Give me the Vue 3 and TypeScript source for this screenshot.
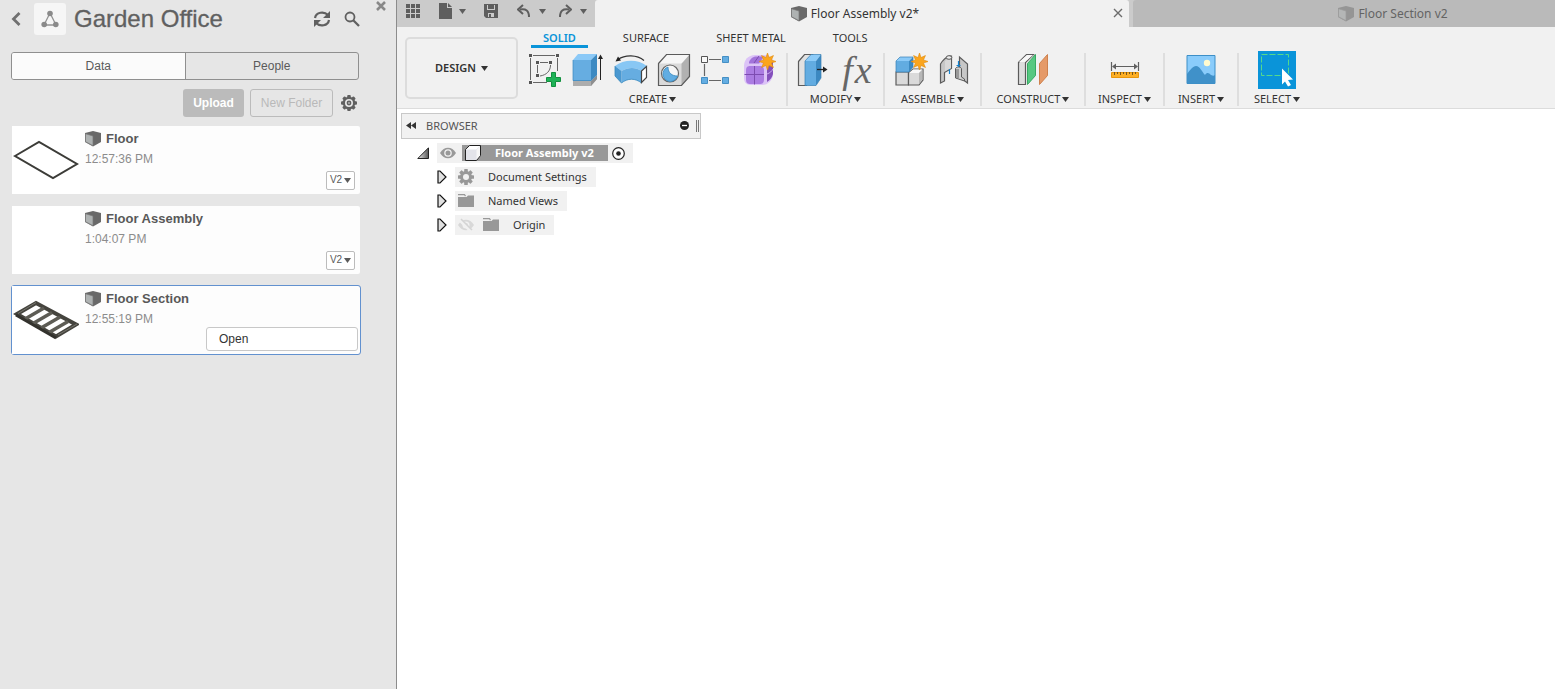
<script setup lang="ts">
import { ref } from 'vue'

interface Project { name: string; time: string; preview: 'frame' | 'blank' | 'joists'; selected: boolean }
interface Tool { icon: string; label: string }
interface Group { label: string; size: string; tools: Tool[] }
interface TreeNode { label: string; icon: string; hidden: boolean }

const projects: Project[] = [
  { name: 'Floor', time: '12:57:36 PM', preview: 'frame', selected: false },
  { name: 'Floor Assembly', time: '1:04:07 PM', preview: 'blank', selected: false },
  { name: 'Floor Section', time: '12:55:19 PM', preview: 'joists', selected: true },
]

const ribbonTabs: string[] = ['SOLID', 'SURFACE', 'SHEET METAL', 'TOOLS']
const activeRibbon = ref('SOLID')
const panelTab = ref('Data')

const groups: Group[] = [
  {
    label: 'CREATE', size: 'create',
    tools: [
      { icon: 'sketch', label: 'Create Sketch' }, { icon: 'extrude', label: 'Extrude' },
      { icon: 'revolve', label: 'Revolve' }, { icon: 'hole', label: 'Hole' },
      { icon: 'pattern', label: 'Pattern' }, { icon: 'form', label: 'Create Form' },
    ],
  },
  { label: 'MODIFY', size: 'pair', tools: [{ icon: 'presspull', label: 'Press Pull' }, { icon: 'fx', label: 'Parameters' }] },
  { label: 'ASSEMBLE', size: 'pair', tools: [{ icon: 'component', label: 'New Component' }, { icon: 'joint', label: 'Joint' }] },
  { label: 'CONSTRUCT', size: 'construct', tools: [{ icon: 'plane', label: 'Offset Plane' }] },
  { label: 'INSPECT', size: 'inspect', tools: [{ icon: 'measure', label: 'Measure' }] },
  { label: 'INSERT', size: 'insert', tools: [{ icon: 'picture', label: 'Decal' }] },
  { label: 'SELECT', size: 'select', tools: [{ icon: 'pick', label: 'Select' }] },
]

const nodes: TreeNode[] = [
  { label: 'Document Settings', icon: 'cog', hidden: false },
  { label: 'Named Views', icon: 'folder', hidden: false },
  { label: 'Origin', icon: 'folder', hidden: true },
]
</script>

<template>
  <svg class="defs" width="0" height="0" aria-hidden="true">
    <defs>
      <linearGradient id="gTri" x1="0" y1="0" x2="1" y2="0"><stop offset="0" stop-color="#eee" /><stop offset="1" stop-color="#555" /></linearGradient>
      <symbol id="cube" viewBox="0 0 16 16">
        <path d="M0 2 8 0l8 2v9l-8 4.500-8-4.500z" fill="#696969" />
        <path d="M.5 2.700 8 5v9.700L.5 10.700z" fill="#aeb2b2" stroke="#777" stroke-width=".7" />
      </symbol>
      <symbol id="caret" viewBox="0 0 7 5"><path d="M0 0h7L3.500 5z" fill="currentColor" /></symbol>
      <symbol id="cog" viewBox="0 0 16 16">
        <g fill="currentColor">
          <rect x="6.200" y="0" width="3.600" height="16" rx=".6" />
          <rect x="6.200" y="0" width="3.600" height="16" rx=".6" transform="rotate(45 8 8)" />
          <rect x="6.200" y="0" width="3.600" height="16" rx=".6" transform="rotate(90 8 8)" />
          <rect x="6.200" y="0" width="3.600" height="16" rx=".6" transform="rotate(135 8 8)" />
          <circle cx="8" cy="8" r="6" />
        </g>
        <circle cx="8" cy="8" r="3" fill="#f1f1f1" />
      </symbol>
      <symbol id="gear" viewBox="0 0 16 16">
        <g fill="currentColor">
          <rect x="6.200" y="0" width="3.600" height="16" rx="1" />
          <rect x="6.200" y="0" width="3.600" height="16" rx="1" transform="rotate(45 8 8)" />
          <rect x="6.200" y="0" width="3.600" height="16" rx="1" transform="rotate(90 8 8)" />
          <rect x="6.200" y="0" width="3.600" height="16" rx="1" transform="rotate(135 8 8)" />
          <circle cx="8" cy="8" r="6.300" />
        </g>
        <circle cx="8" cy="8" r="4" fill="#e6e6e6" />
        <circle cx="8" cy="8" r="2.400" fill="currentColor" />
        <circle cx="8" cy="8" r=".8" fill="#e6e6e6" />
      </symbol>
      <symbol id="folder" viewBox="0 0 16 16">
        <path d="M0 1.700h6.500l1 1.500" stroke="#989898" stroke-width="1.200" fill="none" />
        <path d="M0 4h8.500L10 2.500h6V14H0z" fill="#989898" />
      </symbol>
      <symbol id="burst" viewBox="-8 -8 16 16">
        <path d="M0-8 1.400-3.700 5.600-5.600 3.700-1.400 8 0 3.700 1.400 5.600 5.600 1.400 3.700 0 8-1.400 3.700-5.600 5.600-3.700 1.400-8 0-3.700-1.400-5.600-5.600-1.400-3.700z" fill="#fba51d" stroke="#e28d10" stroke-width=".6" />
      </symbol>

      <symbol id="t-sketch" viewBox="0 0 36 36">
        <path d="M6 3.500h22M3.500 6v22M6 30.500h14M30.500 6v13" stroke="#666" fill="none" />
        <path d="M2 2h3v3H2zM29 2h3v3h-3zM2 29h3v3H2zM9 9h3v3H9zM22 9h3v3h-3zM9 22h3v3H9z" fill="#555" />
        <path d="M13 10.500h8M10.500 13v8M23.500 13c0 6-4 10-10.500 11" stroke="#666" fill="none" />
        <path d="M24.500 20.500h4v5h5v4h-5v5h-4v-5h-5v-4h5z" fill="#1eb257" stroke="#12913f" />
      </symbol>
      <symbol id="t-extrude" viewBox="0 0 36 36">
        <path d="M3 29h18l6-6v4l-6 7H3z" fill="#adadad" /><path d="m21 29 6-6v4l-6 7z" fill="#8f8f8f" />
        <path d="M3 8 8 2h19l-6 6z" fill="#8bc9f7" /><path d="M3 8h18v21H3z" fill="#66ade1" /><path d="m21 8 6-6v21l-6 6z" fill="#3c8ac2" />
        <path d="M3 28.500h18M3 8v20.500" stroke="#3987bd" stroke-width=".7" />
        <path d="M30.500 28V5" stroke="#222" /><path d="m28 7 2.500-4.500L33 7z" fill="#222" />
      </symbol>
      <symbol id="t-revolve" viewBox="0 0 36 36">
        <path d="M5 7.500c7-5 19-5 26 1" stroke="#333" stroke-width="1.200" fill="none" /><path d="M2.500 9.500 5 4.500l3 4z" fill="#222" />
        <path d="M2 14c9-7 23-7 32 0l-5.500 5c-6-4-13-4-20 0z" fill="#88c7f4" />
        <path d="M8.500 19c7-4 14-4 20 0v12c-6-5-14-5-20 0z" fill="#66ade1" />
        <path d="m2 14 6.500 5v12L2 24z" fill="#4a98d0" />
        <path d="M2 14v10l6.500 7c6-5 14-5 20 0" fill="none" stroke="#3588be" stroke-width=".8" />
        <path d="m33.500 14.500-5 4.500v11.500l5-5z" fill="#fff" stroke="#444" stroke-width="1.200" />
      </symbol>
      <symbol id="t-hole" viewBox="0 0 36 36">
        <path d="m2.500 11.500 8-9h23v22l-8 9h-23z" fill="#dadada" /><path d="m25.500 11.500 8-9v22l-8 9z" fill="#b1b1b1" /><path d="m2.500 11.500 8-9h23l-8 9z" fill="#f6f6f6" />
        <path d="m2.500 11.500 8-9h23v22l-8 9h-23z" fill="none" stroke="#5b5b5b" stroke-width="1.200" />
        <circle cx="14" cy="21.500" r="8.500" fill="#f6f6f6" stroke="#666" stroke-width="1.200" />
        <path d="M12 15c0 6 4 9 9.500 9A7.400 7.400 0 1 1 12 15" fill="#61ade2" stroke="#3588be" stroke-width=".8" />
      </symbol>
      <symbol id="t-pattern" viewBox="0 0 36 36">
        <path d="M10 7.500h12M5.500 12v12M10 28.500h12" stroke="#666" stroke-width="1.200" />
        <path d="M2.500 4.500h6v6h-6z" fill="#f8f8f8" stroke="#555" />
        <path d="M23.500 4.500h6v6h-6zM2.500 25.500h6v6h-6zM23.500 25.500h6v6h-6z" fill="#63ade2" stroke="#458fc4" />
      </symbol>
      <symbol id="t-form" viewBox="0 0 36 36">
        <path d="M2 14C2 8 6 3 13 3h9c6 0 9 3 9 7v12c0 6-5 11-11 11H9c-5 0-7-3-7-7z" fill="#dcc4f7" />
        <path d="M7 10c2-4 4-5.500 8-5.500h7l-5 7H7z" fill="#a273da" />
        <path d="M4 19c0-4 1-5 5-5h8c4 0 5 1 5 5v8c0 4-1 5-5 5H9c-4 0-5-1-5-5z" fill="#ab7ce2" />
        <path d="M25 15c1-3 4-5 6-6v13c-1 4-3 6-6 8z" fill="#8450bb" />
        <path d="M2.500 22.500H22M12.500 14v18.500M12 11l5-7" stroke="#7d4cb0" fill="none" /><path d="M25 22c3-1 5-3 6-5" stroke="#c9a6ee" fill="none" />
        <use href="#burst" x="17" y="1" width="17" height="17" />
      </symbol>
      <symbol id="t-presspull" viewBox="0 0 36 36">
        <path d="M2.500 9.500 8.500 2.500h8l-6 7v24h-8z" fill="#e1e1e1" stroke="#5b5b5b" stroke-width="1.200" />
        <path d="m9 9 6-6.500h10L20 9z" fill="#8ccbf8" /><path d="M9 9h11v24.500H9z" fill="#62ace1" /><path d="m20 9 5-6.500V26l-5 7.500z" fill="#3c89c1" />
        <path d="M9 9 15 2.500h10V26l-5 7.500H9z" fill="none" stroke="#3780b4" stroke-width=".7" />
        <path d="M21 17.500h8" stroke="#222" stroke-width="1.300" /><path d="m27 14.500 4.500 3-4.500 3z" fill="#222" />
      </symbol>
      <symbol id="t-component" viewBox="0 0 36 36">
        <path d="M3 20h12.500v13H3z" fill="#dadada" stroke="#5b5b5b" stroke-width="1.200" />
        <path d="m15.500 21 4.500-4h10v11l-4 5H15.500z" fill="#dadada" stroke="#5b5b5b" stroke-width="1.200" />
        <path d="m16 21 4-3.500h9.500L26 21z" fill="#f8f8f8" /><path d="m26 21 3.500-3.500v10L26 32z" fill="#b7b7b7" />
        <path d="m3 9 4-4h13l-4 4z" fill="#8bcaf8" /><path d="M3 9h13v11H3z" fill="#62ace1" /><path d="m16 9 4-4v10l-4 5z" fill="#3c89c1" />
        <path d="m3 9 4-4h13v10l-4 5H3z" fill="none" stroke="#3780b4" stroke-width=".7" />
        <use href="#burst" x="18" y="1" width="17" height="17" />
      </symbol>
      <symbol id="t-joint" viewBox="0 0 36 36">
        <path d="M4.500 31V12c3-5 5-6.500 9-8h2v12.500l-7 4V29z" fill="#c7c7c7" stroke="#5c5c5c" stroke-width="1.200" />
        <path d="M9 9v10l6-3V5z" fill="#d8d8d8" /><ellipse cx="13" cy="5.500" rx="2.800" ry="1.800" fill="#eee" stroke="#5c5c5c" />
        <path d="M31.500 31V12l-8-7v20z" fill="#c7c7c7" stroke="#5c5c5c" stroke-width="1.200" />
        <path d="M19.500 16.500c1-2 5-2 6 0V25l3 2v2l-9-3z" fill="#cfcfcf" stroke="#5c5c5c" />
        <path d="M20 17v9h3v-9z" fill="#999" /><path d="M13.500 17v5M22.500 9v6m-2-1.500h4" stroke="#1683ce" stroke-width="1.200" fill="none" />
      </symbol>
      <symbol id="t-plane" viewBox="0 0 36 36">
        <path d="m3.500 10.500 8-8h7l-8 8v22h-7z" fill="#ddd" stroke="#5b5b5b" stroke-width="1.200" /><path d="m4 10 8-7h6l-8 7z" fill="#f7f7f7" />
        <path d="m12.500 11.500 8-9v21l-8 9z" fill="#57c881" stroke="#37a963" />
        <path d="m24.500 11.500 8-9v21l-8 9z" fill="#e59a68" stroke="#ce814d" />
      </symbol>
      <symbol id="t-measure" viewBox="0 0 36 36">
        <path d="M4.500 10v9M31.500 10v9M6 14.500h24" stroke="#606060" stroke-width="1.200" /><path d="m5 14.500 4-3v6zM31 14.500l-4-3v6z" fill="#606060" />
        <path d="M4.500 20.500h27v5h-27z" fill="#fdaf25" stroke="#e8960c" />
        <path d="M7.500 20v3M10.500 20v2M13.500 20v3M16.500 20v2M19.500 20v3M22.500 20v2M25.500 20v3M28.500 20v2" stroke="#76561c" />
      </symbol>
      <symbol id="t-picture" viewBox="0 0 36 36">
        <path d="M4 3.500h28v28H4z" fill="#8accfb" /><path d="M4 22c3-4 6-8 9-8 4 0 6 6 9 9 2-3 4-2 6 0 2 1 3 1 4 0v9H4z" fill="#4091c9" />
        <path d="M4 3.500h28v28H4z" fill="none" stroke="#3d8fc7" /><circle cx="24" cy="11" r="3.200" fill="#fffbd0" />
      </symbol>
      <symbol id="t-pick" viewBox="0 0 38 38">
        <path d="M0 0h38v38H0z" fill="#0a94d9" /><path d="M3.500 3.500h27v21h-27z" fill="none" stroke="#54d98c" stroke-dasharray="6 2" />
        <path d="m24 17.500 11 11-5 .5 3 5-3 1.500-3-5-3 3z" fill="#fff" />
      </symbol>
    </defs>
  </svg>

  <div class="app">
    <aside class="data-panel">
      <button class="close-panel" aria-label="Close panel">
        <svg width="10" height="10" viewBox="0 0 10 10"><path d="m1 1 8 8M9 1 1 9" stroke="#888" stroke-width="2.500" /></svg>
      </button>
      <header class="project-head">
        <button class="back" aria-label="Back">
          <svg width="10" height="14" viewBox="0 0 10 14"><path d="M8.500 1 2.500 7l6 6" fill="none" stroke="#707070" stroke-width="2.800" /></svg>
        </button>
        <span class="project-icon">
          <svg width="18" height="18" viewBox="0 0 18 18"><path d="m9 3-6 12h12z" fill="none" stroke="#929292" stroke-width="1.300" /><g fill="#8a8a8a"><circle cx="9" cy="3.500" r="2.800" /><circle cx="3.200" cy="14.500" r="2.800" /><circle cx="14.800" cy="14.500" r="2.800" /></g></svg>
        </span>
        <h1>Garden Office</h1>
        <button aria-label="Refresh">
          <svg width="18" height="18" viewBox="0 0 18 18"><g fill="none" stroke="#606060" stroke-width="2.200"><path d="M2 8c1-6 9-7 13-3M16 10c-1 6-9 7-13 3" /></g><path d="M17 1v7h-7zM1 17v-7h7z" fill="#606060" /></svg>
        </button>
        <button class="search" aria-label="Search">
          <svg width="16" height="16" viewBox="0 0 16 16"><circle cx="6" cy="6" r="4.500" fill="none" stroke="#606060" stroke-width="1.800" /><path d="m9 9 6 6" stroke="#606060" stroke-width="2.300" /></svg>
        </button>
      </header>

      <div class="segmented">
        <button v-for="t in ['Data', 'People']" :key="t" :class="{ on: panelTab === t }" @click="panelTab = t">{{ t }}</button>
      </div>

      <div class="actions">
        <button class="upload">Upload</button>
        <button class="new-folder">New Folder</button>
        <button class="settings" aria-label="Settings"><svg width="16" height="16"><use href="#gear" /></svg></button>
      </div>

      <ul class="projects">
        <li v-for="p in projects" :key="p.name" :class="{ selected: p.selected }">
          <div class="preview">
            <svg v-if="p.preview === 'frame'" width="66" height="42" viewBox="0 0 66 42"><path d="m2 17 24-14 38 22-24 14z" fill="none" stroke="#3c3c38" stroke-width="2" /></svg>
            <svg v-else-if="p.preview === 'joists'" width="66" height="42" viewBox="0 0 66 42">
              <path d="m4 15 19-11 40 21.500-20 12z" fill="none" stroke="#45443e" stroke-width="4" />
              <path d="m12 20 19-11M20 24.500l19-11M28 29l19-11M36 33.500l19-11" stroke="#5d5c55" stroke-width="3.500" />
              <path d="m5 14.500 18-11M45 36l19-11" stroke="#77766e" />
              <path d="m3 16 40 23" stroke="#33322d" stroke-width="3" />
            </svg>
          </div>
          <div class="info">
            <h2><svg width="16" height="16"><use href="#cube" /></svg>{{ p.name }}</h2>
            <time>{{ p.time }}</time>
          </div>
          <button v-if="p.selected" class="open">Open</button>
          <button v-else class="version">V2<svg width="7" height="5"><use href="#caret" /></svg></button>
        </li>
      </ul>
    </aside>

    <main class="workspace">
      <div class="top-strip">
        <div class="quick">
          <button class="q-grid" aria-label="Data panel">
            <svg width="14" height="14" viewBox="0 0 14 14"><path d="M0 0h4v4H0zM5 0h4v4H5zM10 0h4v4h-4zM0 5h4v4H0zM5 5h4v4H5zM10 5h4v4h-4zM0 10h4v4H0zM5 10h4v4H5zM10 10h4v4h-4z" fill="#5e5e5e" /></svg>
          </button>
          <button class="q-file" aria-label="File">
            <svg width="14" height="16" viewBox="0 0 14 16"><path d="M0 0h8v5h5v11H0zM9 0l4 4H9z" fill="#5e5e5e" /></svg>
            <svg width="7" height="5"><use href="#caret" /></svg>
          </button>
          <button class="q-save" aria-label="Save">
            <svg width="14" height="14" viewBox="0 0 14 14"><path d="M0 0h14v14H2l-2-2z" fill="#5e5e5e" /><path d="M3 1h8v5H3zM4 9h6v4H4z" fill="#cbcbcb" /><path d="M4 1h6v4H4zM5 10h2v3H5z" fill="#5e5e5e" /></svg>
          </button>
          <button class="q-undo" aria-label="Undo">
            <svg width="14" height="14" viewBox="0 0 14 14"><path d="M3 5.500c6-1 9 1 9 7.500" fill="none" stroke="#5e5e5e" stroke-width="2" /><path d="M6 1 1 5.500 6 10" fill="none" stroke="#5e5e5e" stroke-width="2" /></svg>
            <svg width="7" height="5"><use href="#caret" /></svg>
          </button>
          <button class="q-redo" aria-label="Redo">
            <svg width="14" height="14" viewBox="0 0 14 14"><path d="M11 5.500c-6-1-9 1-9 7.500" fill="none" stroke="#5e5e5e" stroke-width="2" /><path d="m8 1 5 4.500L8 10" fill="none" stroke="#5e5e5e" stroke-width="2" /></svg>
            <svg width="7" height="5"><use href="#caret" /></svg>
          </button>
        </div>
        <div class="doc-tab current">
          <svg width="16" height="16"><use href="#cube" /></svg><span>Floor Assembly v2*</span>
          <button class="close-tab" aria-label="Close Floor Assembly"><svg width="10" height="10" viewBox="0 0 10 10"><path d="m1 1 8 8M9 1 1 9" stroke="#6c6c6c" stroke-width="1.400" /></svg></button>
        </div>
        <div class="doc-tab idle">
          <svg width="16" height="16"><use href="#cube" /></svg><span>Floor Section v2</span>
        </div>
      </div>

      <div class="ribbon">
        <button class="design">DESIGN<svg width="7" height="5"><use href="#caret" /></svg></button>
        <div class="ribbon-body">
          <nav class="ribbon-tabs">
            <button v-for="t in ribbonTabs" :key="t" :class="{ on: activeRibbon === t }" @click="activeRibbon = t">{{ t }}</button>
          </nav>
          <div class="groups">
            <section v-for="g in groups" :key="g.label" class="group" :class="g.size">
              <div class="tools">
                <button v-for="t in g.tools" :key="t.icon" :aria-label="t.label">
                  <span v-if="t.icon === 'fx'" class="fx"><i>f</i><i>x</i></span>
                  <svg v-else><use :href="'#t-' + t.icon" /></svg>
                </button>
              </div>
              <button class="group-label">{{ g.label }}<svg width="7" height="5"><use href="#caret" /></svg></button>
            </section>
          </div>
        </div>
      </div>

      <div class="canvas">
        <div class="browser-head">
          <button aria-label="Collapse"><svg width="10" height="7" viewBox="0 0 10 7"><path d="M5 0v7L0 3.500zM10 0v7L5 3.500z" fill="#333" /></svg></button>
          <span>BROWSER</span>
          <button aria-label="Minimize"><svg width="9" height="9" viewBox="0 0 9 9"><circle cx="4.500" cy="4.500" r="4.500" fill="#222" /><path d="M2 4.500h5" stroke="#fff" stroke-width="1.300" /></svg></button>
          <i class="grip"></i>
        </div>
        <ul class="tree">
          <li class="root">
            <button aria-label="Collapse node"><svg width="12" height="12" viewBox="0 0 12 12"><path d="M11.500.8v10.700H.8z" fill="url(#gTri)" stroke="#222" /></svg></button>
            <div class="node root-node">
              <svg class="eye" width="16" height="12" viewBox="0 0 16 12"><path d="M0 6c4-7 12-7 16 0-4 7-12 7-16 0" fill="#999" /><circle cx="8" cy="6" r="3.800" fill="#f1f1f1" /><circle cx="8" cy="6" r="2.500" fill="#999" /></svg>
              <span class="root-label">
                <svg width="18" height="16" viewBox="0 0 18 16"><path d="m1.500 4.500 4-4h11v10l-4 5h-11z" fill="#e3e4ea" stroke="#222" /><path d="m2 4.500 4-3.500h10l-4 3.500z" fill="#fff" /><path d="m12.500 4.500 3.500-3v9l-3.500 4z" fill="#f7f7f7" /></svg>
                Floor Assembly v2
              </span>
              <svg class="target" width="13" height="13" viewBox="0 0 13 13"><circle cx="6.500" cy="6.500" r="5.800" fill="#fff" stroke="#222" stroke-width="1.200" /><circle cx="6.500" cy="6.500" r="2.300" fill="#222" /></svg>
            </div>
          </li>
          <li v-for="n in nodes" :key="n.label" class="child">
            <button :aria-label="'Expand ' + n.label"><svg width="10" height="14" viewBox="0 0 10 14"><path d="M1 1h2l6 6-6 6H1z" fill="#e0e0e0" stroke="#111" stroke-width="1.200" /></svg></button>
            <div class="node">
              <svg v-if="n.hidden" class="hidden-eye" width="16" height="14" viewBox="0 0 16 14"><path d="M0 7c4-7 12-7 16 0-4 7-12 7-16 0" fill="#d8d8d8" /><circle cx="8" cy="7" r="3.500" fill="#f1f1f1" /><circle cx="8" cy="7" r="2" fill="#d8d8d8" /><path d="m2 2 11 11" stroke="#f1f1f1" stroke-width="3.500" /><path d="m3 1 11 11" stroke="#d4d4d4" stroke-width="1.500" /></svg>
              <svg class="kind" width="16" height="16"><use :href="'#' + n.icon" /></svg>
              <span>{{ n.label }}</span>
            </div>
          </li>
        </ul>
      </div>
    </main>
  </div>
</template>

<style>
body { margin: 0; background: #fff; }
</style>

<style scoped>
* { box-sizing: border-box; }
button { margin: 0; padding: 0; border: 0; background: none; font: inherit; color: inherit; display: flex; align-items: center; justify-content: center; cursor: pointer; }
svg { display: block; flex: none; }
ul { list-style: none; margin: 0; padding: 0; }
h1, h2 { margin: 0; }
.defs { position: absolute; }
.app { display: flex; min-height: 100vh; }

.data-panel { position: relative; flex: none; width: 397px; padding: 3px 36px 0 11px; background: #e6e6e6; border-right: 1px solid #8c8c8c; font: 12px/16px "Liberation Sans", Arial, sans-serif; color: #5a5a5a; }
.close-panel { position: absolute; top: 1px; right: 10px; }
.project-head { display: flex; align-items: center; height: 32px; }
.back { margin-right: 13px; }
.project-icon { display: flex; align-items: center; justify-content: center; width: 32px; height: 32px; border-radius: 3px; background: #f6f6f6; }
h1 { flex: 1; margin-left: 8px; font-size: 24px; line-height: 32px; font-weight: 400; color: #606060; -webkit-text-stroke: 0.3px #606060; }
.search { margin-left: 13px; }
.segmented { display: flex; height: 28px; margin-top: 17px; margin-right: 1px; border: 1px solid #8f8f8f; border-radius: 3px; overflow: hidden; }
.segmented button { flex: 1; }
.segmented button + button { border-left: 1px solid #8f8f8f; }
.segmented .on { background: #fbfbfb; }
.actions { display: flex; justify-content: flex-end; align-items: center; height: 28px; margin-top: 9px; padding-right: 3px; }
.upload { width: 61px; height: 28px; border-radius: 3px; background: #bbb; color: #fff; font-weight: 700; }
.new-folder { width: 83px; height: 28px; margin: 0 8px 0 6px; border: 1px solid #bbb; border-radius: 3px; color: #b9b9b9; }
.settings { color: #606060; }
.projects { display: flex; flex-direction: column; gap: 10px; margin-top: 8px; margin-right: -1px; }
.projects li { position: relative; display: flex; height: 70px; border: 1px solid transparent; border-radius: 3px; background: #fdfdfd; background-clip: padding-box; }
.projects .selected { border-color: #6291cf; }
.preview { display: flex; align-items: center; width: 68px; padding-left: 1px; background: #fff; }
.info { padding: 4px 0 0 5px; }
h2 { display: flex; align-items: center; gap: 5px; font-size: 13px; line-height: 18px; font-weight: 700; color: #585858; }
time { display: block; margin-top: 2px; line-height: 18px; color: #8c8c8c; }
.version { position: absolute; right: 5px; bottom: 4px; width: 29px; height: 19px; padding-bottom: 1px; gap: 2px; border: 1px solid #bcbcbc; border-radius: 2px; background: #fff; font-size: 10px; }
.open { position: absolute; right: 2px; bottom: 3px; width: 152px; height: 24px; padding-left: 12px; justify-content: flex-start; border: 1px solid #c8c8c8; border-radius: 3px; background: #fff; color: #333; }

.workspace { flex: 1; min-width: 0; display: flex; flex-direction: column; font: 11px/16px "Noto Sans", "Open Sans", sans-serif; color: #333; }
.top-strip { display: flex; height: 27px; background: #cbcbcb; overflow: hidden; }
.quick { display: flex; flex: none; width: 198px; padding: 0 0 5px 9px; color: #5e5e5e; }
.quick button { gap: 6px; }
.q-file { margin-left: 19px; }
.q-save { margin-left: 18px; }
.q-undo { margin-left: 19px; }
.q-undo.q-undo, .q-redo.q-redo { gap: 8px; }
.q-redo { margin-left: 12px; }
.doc-tab { position: relative; display: flex; flex: 0 0 534px; align-items: center; justify-content: center; gap: 4px; border-radius: 3px 3px 0 0; font-size: 12px; }
.doc-tab.current { padding-right: 14px; background: #f1f1f1; }
.doc-tab.idle { margin-left: 4px; padding-right: 14px; background: #bababa; color: #646464; }
.idle svg { opacity: .45; }
.close-tab { position: absolute; right: 6px; top: 8px; }

.ribbon { display: flex; height: 82px; padding: 3px 8px 0; background: #f1f1f1; border-bottom: 1px solid #dcdcdc; }
.design { flex: none; align-self: flex-start; width: 113px; height: 62px; margin-top: 7px; gap: 5px; border: 2px solid #dcdcdc; border-radius: 5px; font-weight: 600; }
.ribbon-body { flex: 1; min-width: 0; padding-left: 6px; }
.ribbon-tabs { display: flex; gap: 23px; padding-left: 7px; }
.ribbon-tabs button { height: 18px; padding: 0 12px; border-bottom: 3px solid transparent; }
.ribbon-tabs .on { color: #0a94d9; border-color: #0a94d9; font-weight: 600; }
.groups { display: flex; margin-top: 5px; }
.group { display: flex; flex: none; flex-direction: column; align-items: center; height: 53px; border-right: 2px solid #dedede; }
.group:last-child { border: 0; }
.create { width: 264px; padding-right: 5px; }
.pair { width: 97px; }
.construct { width: 104px; }
.inspect { width: 79px; }
.insert { width: 74px; }
.select { width: 76px; }
.tools { display: flex; gap: 7px; height: 34px; align-items: center; }
.tools button, .tools svg { width: 36px; height: 36px; }
.select .tools button, .select .tools svg { width: 38px; height: 38px; }
.fx { display: flex; gap: 2px; font: italic 38px/36px "Liberation Serif", serif; color: #666; }
.group-label { flex: none; gap: 2px; height: 14px; margin-top: 5px; }

.canvas { flex: 1; padding: 4px; background: #fff; }
.browser-head { display: flex; align-items: center; width: 300px; height: 26px; padding: 0 1px 1px 4px; border: 1px solid #c8c8c8; background: #f1f1f1; color: #555; }
.browser-head span { flex: 1; margin-left: 10px; }
.grip { width: 3px; height: 12px; margin-left: 7px; border: solid #777; border-width: 0 1px; }
.tree { display: flex; flex-direction: column; gap: 4px; margin-top: 4px; }
.tree li { display: flex; align-items: center; height: 20px; }
.root { padding-left: 16px; }
.child { padding-left: 36px; }
.node { display: flex; align-items: center; height: 20px; background: #f1f1f1; }
.root-node { margin-left: 8px; padding: 0 8px 0 3px; }
.child .node { margin-left: 8px; padding: 0 9px 0 3px; }
.root-label { display: flex; align-items: center; width: 146px; height: 16px; gap: 13px; margin: 0 4px 0 6px; padding-left: 2px; background: #989898; color: #fff; font-weight: 700; white-space: nowrap; }
.kind { margin-right: 14px; color: #989898; }
.hidden-eye { margin-right: 9px; }
</style>
